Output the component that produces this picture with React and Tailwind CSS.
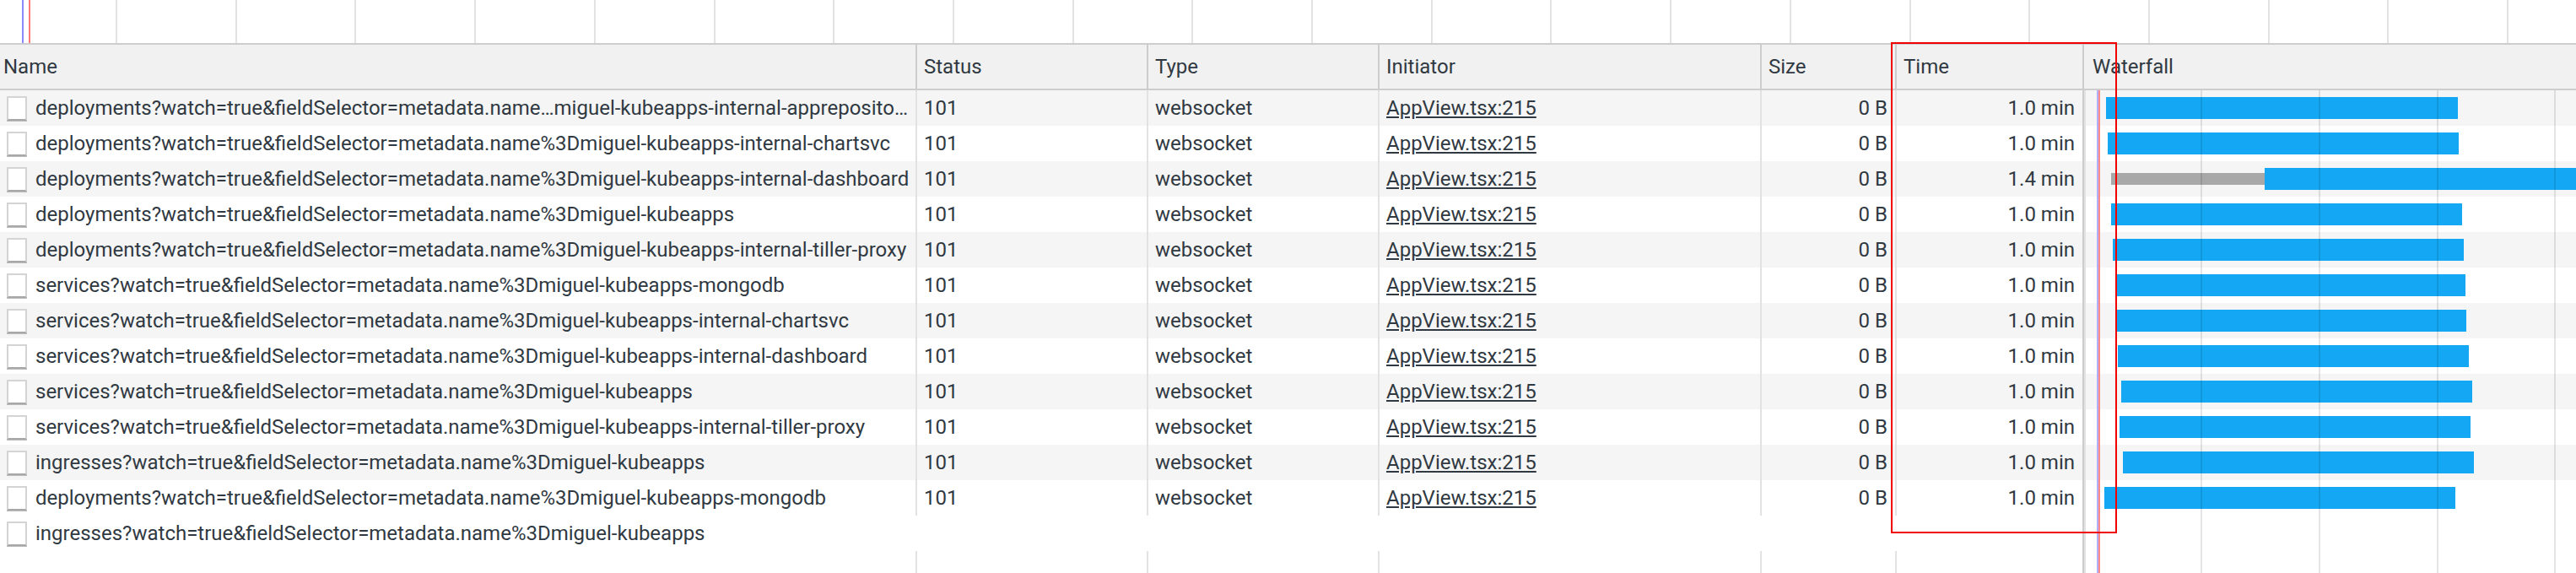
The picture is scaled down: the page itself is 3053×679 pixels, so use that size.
import React from 'react';

const names = [
  'deployments?watch=true&fieldSelector=metadata.name…miguel-kubeapps-internal-appreposito…',
  'deployments?watch=true&fieldSelector=metadata.name%3Dmiguel-kubeapps-internal-chartsvc',
  'deployments?watch=true&fieldSelector=metadata.name%3Dmiguel-kubeapps-internal-dashboard',
  'deployments?watch=true&fieldSelector=metadata.name%3Dmiguel-kubeapps',
  'deployments?watch=true&fieldSelector=metadata.name%3Dmiguel-kubeapps-internal-tiller-proxy',
  'services?watch=true&fieldSelector=metadata.name%3Dmiguel-kubeapps-mongodb',
  'services?watch=true&fieldSelector=metadata.name%3Dmiguel-kubeapps-internal-chartsvc',
  'services?watch=true&fieldSelector=metadata.name%3Dmiguel-kubeapps-internal-dashboard',
  'services?watch=true&fieldSelector=metadata.name%3Dmiguel-kubeapps',
  'services?watch=true&fieldSelector=metadata.name%3Dmiguel-kubeapps-internal-tiller-proxy',
  'ingresses?watch=true&fieldSelector=metadata.name%3Dmiguel-kubeapps',
  'deployments?watch=true&fieldSelector=metadata.name%3Dmiguel-kubeapps-mongodb',
];

// bar offsets inside the waterfall column: [start, end], optional wait = where blue begins
const bars = [
  { start: 24, end: 441 },
  { start: 26, end: 442 },
  { start: 30, wait: 212, end: 600 },
  { start: 30, end: 446 },
  { start: 32, end: 448 },
  { start: 35, end: 450 },
  { start: 36, end: 451 },
  { start: 38, end: 454 },
  { start: 42, end: 458 },
  { start: 40, end: 456 },
  { start: 44, end: 460 },
  { start: 22, end: 438 },
];

const overviewTicks = Array.from({ length: 21 }, (_, i) => 137 + i * 141.7);
const waterfallTicks = [136, 276, 416, 555];

function FileIcon() {
  return (
    <div className="w-[24px] h-[29px] shrink-0 bg-white border-2 border-[#d4d4d4] border-b-[#a8a8a8] shadow-[0_1px_0_#bbb]" />
  );
}

function Row({ name, striped, time }) {
  return (
    <div className={`flex h-[42px] ${striped ? 'bg-[#f5f5f5]' : 'bg-white'}`}>
      <div className="w-[1087px] pl-2 flex items-center gap-[10px] border-r-2 border-[#e2e2e2]">
        <FileIcon />
        <span className="whitespace-nowrap">{name}</span>
      </div>
      <div className="w-[274px] pl-2 flex items-center border-r-2 border-[#e2e2e2]">101</div>
      <div className="w-[274px] pl-2 flex items-center border-r-2 border-[#e2e2e2]">websocket</div>
      <div className="w-[453px] pl-2 flex items-center border-r-2 border-[#e2e2e2]">
        <span className="underline">AppView.tsx:215</span>
      </div>
      <div className="w-[160px] pr-[9px] flex items-center justify-end border-r-2 border-[#e2e2e2]">0 B</div>
      <div className="flex-1 pr-[9px] flex items-center justify-end">{time}</div>
    </div>
  );
}

function BarRow({ bar, striped }) {
  const hasWait = bar.wait !== undefined;
  const blueFrom = hasWait ? bar.wait : bar.start;
  return (
    <div className={`flex items-center h-[42px] overflow-hidden ${striped ? 'bg-[#f5f5f5]' : 'bg-white'}`}>
      {hasWait && (
        <div
          className="h-[14px] shrink-0 bg-[#a8a8a8]"
          style={{ marginLeft: bar.start, width: bar.wait - bar.start }}
        />
      )}
      <div
        className="h-[26px] shrink-0 bg-[#14a7f4]"
        style={{ marginLeft: hasWait ? 0 : blueFrom, width: bar.end - blueFrom }}
      />
    </div>
  );
}

export default function App() {
  return (
    <div className="relative w-[3053px] h-[679px] overflow-hidden bg-white text-[#303942] text-[24px] font-['Roboto',sans-serif]">
      {/* overview strip */}
      <div className="relative h-[51px]">
        {overviewTicks.map((x) => (
          <div key={x} className="absolute top-0 bottom-0 w-[2px] bg-[#e2e2e2]" style={{ left: x }} />
        ))}
        <div className="absolute top-0 bottom-0 left-[26px] w-[2px] bg-[#8a8aff]" />
        <div className="absolute top-0 bottom-0 left-[34px] w-[2px] bg-[#ff7a7a]" />
      </div>

      {/* header */}
      <div className="flex h-[56px] bg-[#f1f1f1] border-y-2 border-[#cdcdcd]">
        <div className="w-[1087px] pl-1 flex items-center border-r-2 border-[#cdcdcd]">Name</div>
        <div className="w-[274px] pl-2 flex items-center border-r-2 border-[#cdcdcd]">Status</div>
        <div className="w-[274px] pl-2 flex items-center border-r-2 border-[#cdcdcd]">Type</div>
        <div className="w-[453px] pl-2 flex items-center border-r-2 border-[#cdcdcd]">Initiator</div>
        <div className="w-[160px] pl-2 flex items-center border-r-2 border-[#cdcdcd]">Size</div>
        <div className="w-[222px] pl-2 flex items-center border-r-2 border-[#cdcdcd]">Time</div>
        <div className="flex-1 pl-[10px] flex items-center">Waterfall</div>
      </div>

      {/* body */}
      <div className="flex h-[572px]">
        <div className="w-[2468px] shrink-0 flex flex-col">
          {names.map((name, i) => (
            <Row key={i} name={name} striped={i % 2 === 0} time={i === 2 ? '1.4 min' : '1.0 min'} />
          ))}
          <div className="flex items-center h-[42px] pl-2 gap-[10px]">
            <FileIcon />
            <span className="whitespace-nowrap">ingresses?watch=true&amp;fieldSelector=metadata.name%3Dmiguel-kubeapps</span>
          </div>
          <div className="flex flex-1">
            <div className="w-[1087px] border-r-2 border-[#e2e2e2]" />
            <div className="w-[274px] border-r-2 border-[#e2e2e2]" />
            <div className="w-[274px] border-r-2 border-[#e2e2e2]" />
            <div className="w-[453px] border-r-2 border-[#e2e2e2]" />
            <div className="w-[160px] border-r-2 border-[#e2e2e2]" />
          </div>
        </div>
        <div className="w-[2px] shrink-0 bg-[#cdcdcd]" />
        <div className="w-[2px] shrink-0 bg-[#e2e2e2]" />
        <div className="relative flex-1 flex flex-col">
          {bars.map((bar, i) => (
            <BarRow key={i} bar={bar} striped={i % 2 === 0} />
          ))}
          {waterfallTicks.map((x) => (
            <div key={x} className="absolute top-0 bottom-0 w-[2px] bg-black/10" style={{ left: x }} />
          ))}
          <div className="absolute top-0 bottom-0 left-[13px] w-[2px] bg-[#b0b0ff]" />
          <div className="absolute top-0 bottom-0 left-[15px] w-[2px] bg-[#ff8a8a]" />
        </div>
      </div>

      {/* red annotation box around the Time column */}
      <div className="absolute left-[2241px] top-[50px] w-[268px] h-[582px] border-2 border-[#f00000]" />
    </div>
  );
}
